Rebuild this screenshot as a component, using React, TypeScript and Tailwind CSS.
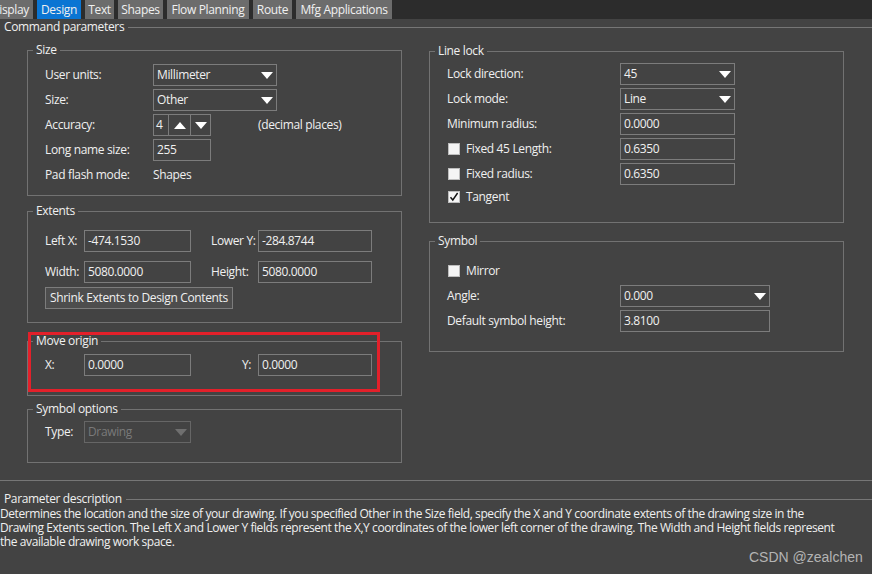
import React from 'react';

const tabs = [
  { label: 'isplay', w: 'w-[33px]', active: false },
  { label: 'Design', w: 'w-[44px]', active: true },
  { label: 'Text', w: 'w-[29px]', active: false },
  { label: 'Shapes', w: 'w-[45px]', active: false },
  { label: 'Flow Planning', w: 'w-[82px]', active: false },
  { label: 'Route', w: 'w-[39px]', active: false },
  { label: 'Mfg Applications', w: 'w-[96px]', active: false },
];

function Arrow({ up = false, color = '#ffffff' }: { up?: boolean; color?: string }) {
  return (
    <svg width="12" height="7" viewBox="0 0 12 7" className="shrink-0">
      <path d={up ? 'M0 7H12L6 0Z' : 'M0 0H12L6 7Z'} fill={color} />
    </svg>
  );
}

function Field({ value, className }: { value: string; className: string }) {
  return (
    <div className={`h-[22px] border border-[#7c7c7c] flex items-center pl-[3px] ${className}`}>
      {value}
    </div>
  );
}

function Select({ value, className, disabled = false }: { value: string; className: string; disabled?: boolean }) {
  return (
    <div
      className={`h-[22px] border flex items-center justify-between pl-[3px] pr-[3px] ${
        disabled ? 'border-[#666666] text-[#7a7a7a]' : 'border-[#7c7c7c]'
      } ${className}`}
    >
      <span>{value}</span>
      <Arrow color={disabled ? '#6f6f6f' : '#ffffff'} />
    </div>
  );
}

function Check({ checked = false }: { checked?: boolean }) {
  return (
    <div className="w-[12px] h-[12px] bg-[#f4f4f4] border border-[#bdbdbd] flex items-center justify-center shrink-0">
      {checked && (
        <svg width="10" height="10" viewBox="0 0 10 10">
          <path d="M1.5 5.2L3.8 8L8.6 1" stroke="#111" strokeWidth="1.4" fill="none" />
        </svg>
      )}
    </div>
  );
}

function Group({ title, className, children }: { title: string; className: string; children: React.ReactNode }) {
  return (
    <fieldset className={`border border-[#727272] px-[17px] ${className}`}>
      <legend className="-ml-[12px] px-[3px] leading-[16px]">{title}</legend>
      {children}
    </fieldset>
  );
}

function Row({ label, labelW, children }: { label: string; labelW: string; children: React.ReactNode }) {
  return (
    <div className="flex items-center h-[22px]">
      <span className={`${labelW} shrink-0`}>{label}</span>
      {children}
    </div>
  );
}

export default function App() {
  return (
    <div className="relative w-[872px] h-[574px] overflow-hidden bg-[#434343] text-[#f0f0f0] text-[12px] leading-[16px] font-['Open_Sans',sans-serif] tracking-[-0.35px]">
      {/* tab strip */}
      <div className="h-[19px] bg-[#2c2c2c] flex gap-[4px]">
        {tabs.map((t) => (
          <div
            key={t.label}
            className={`${t.w} flex items-center ${t.label === 'isplay' ? 'justify-end pr-[4px]' : 'justify-center'} ${
              t.active ? 'bg-[#0a75d3]' : 'bg-[#6c6c6c]'
            } whitespace-nowrap`}
          >
            {t.label}
          </div>
        ))}
      </div>

      {/* command parameters */}
      <fieldset className="border-t border-b border-[#767676] h-[462px]">
        <legend className="px-[4px] leading-[16px]">Command parameters</legend>
        <div className="flex pl-[27px] gap-[27px]">
          {/* left column */}
          <div className="w-[375px] flex flex-col">
            <Group title="Size" className="mt-[7px] h-[154px] pt-[6px]">
              <div className="flex flex-col gap-[3px]">
                <Row label="User units:" labelW="w-[108px]">
                  <Select value="Millimeter" className="w-[124px]" />
                </Row>
                <Row label="Size:" labelW="w-[108px]">
                  <Select value="Other" className="w-[124px]" />
                </Row>
                <Row label="Accuracy:" labelW="w-[108px]">
                  <div className="flex h-[22px] w-[58px] border border-[#7c7c7c]">
                    <div className="w-[14px] flex items-center pl-[2px]">4</div>
                    <div className="w-[22px] border-l border-[#7c7c7c] flex items-center justify-center">
                      <Arrow up />
                    </div>
                    <div className="flex-1 border-l border-[#7c7c7c] flex items-center justify-center">
                      <Arrow />
                    </div>
                  </div>
                  <span className="ml-[47px]">(decimal places)</span>
                </Row>
                <Row label="Long name size:" labelW="w-[108px]">
                  <Field value="255" className="w-[58px]" />
                </Row>
                <Row label="Pad flash mode:" labelW="w-[108px]">
                  <span>Shapes</span>
                </Row>
              </div>
            </Group>

            <Group title="Extents" className="mt-[7px] h-[120px] pt-[11px]">
              <div className="flex flex-col gap-[9px]">
                <div className="flex items-center">
                  <Row label="Left X:" labelW="w-[39px]">
                    <Field value="-474.1530" className="w-[107px]" />
                  </Row>
                  <div className="ml-[20px]">
                    <Row label="Lower Y:" labelW="w-[47px]">
                      <Field value="-284.8744" className="w-[114px]" />
                    </Row>
                  </div>
                </div>
                <div className="flex items-center">
                  <Row label="Width:" labelW="w-[39px]">
                    <Field value="5080.0000" className="w-[107px]" />
                  </Row>
                  <div className="ml-[20px]">
                    <Row label="Height:" labelW="w-[47px]">
                      <Field value="5080.0000" className="w-[114px]" />
                    </Row>
                  </div>
                </div>
              </div>
              <button className="mt-[4px] h-[22px] w-[188px] border border-[#7c7c7c] bg-[#4d4d4d] flex items-center justify-center">
                Shrink Extents to Design Contents
              </button>
            </Group>

            <div className="relative mt-[10px]">
              <Group title="Move origin" className="h-[63px] pt-[5px]">
                <div className="flex items-center">
                  <Row label="X:" labelW="w-[39px]">
                    <Field value="0.0000" className="w-[107px]" />
                  </Row>
                  <div className="ml-[51px]">
                    <Row label="Y:" labelW="w-[16px]">
                      <Field value="0.0000" className="w-[114px]" />
                    </Row>
                  </div>
                </div>
              </Group>
              <div className="absolute left-[1px] top-[-1px] w-[352px] h-[60px] border-[3px] border-[#e3202a]" />
            </div>

            <Group title="Symbol options" className="mt-[5px] h-[62px] pt-[4px]">
              <Row label="Type:" labelW="w-[39px]">
                <Select value="Drawing" className="w-[107px]" disabled />
              </Row>
            </Group>
          </div>

          {/* right column */}
          <div className="w-[415px] flex flex-col">
            <Group title="Line lock" className="mt-[8px] h-[180px] pt-[4px]">
              <div className="flex flex-col gap-[3px]">
                <Row label="Lock direction:" labelW="w-[173px]">
                  <Select value="45" className="w-[115px]" />
                </Row>
                <Row label="Lock mode:" labelW="w-[173px]">
                  <Select value="Line" className="w-[115px]" />
                </Row>
                <Row label="Minimum radius:" labelW="w-[173px]">
                  <Field value="0.0000" className="w-[115px]" />
                </Row>
                <div className="flex items-center h-[22px]">
                  <div className="w-[173px] flex items-center gap-[6px] pl-[1px]">
                    <Check />
                    <span>Fixed 45 Length:</span>
                  </div>
                  <Field value="0.6350" className="w-[115px]" />
                </div>
                <div className="flex items-center h-[22px]">
                  <div className="w-[173px] flex items-center gap-[6px] pl-[1px]">
                    <Check />
                    <span>Fixed radius:</span>
                  </div>
                  <Field value="0.6350" className="w-[115px]" />
                </div>
              </div>
              <div className="flex items-center gap-[6px] pl-[1px] mt-[4px]">
                <Check checked />
                <span>Tangent</span>
              </div>
            </Group>

            <Group title="Symbol" className="mt-[10px] h-[119px] pt-[15px]">
              <div className="flex items-center gap-[6px] pl-[1px] h-[14px]">
                <Check />
                <span>Mirror</span>
              </div>
              <div className="flex flex-col gap-[3px] mt-[7px]">
                <Row label="Angle:" labelW="w-[173px]">
                  <Select value="0.000" className="w-[150px]" />
                </Row>
                <Row label="Default symbol height:" labelW="w-[173px]">
                  <Field value="3.8100" className="w-[150px]" />
                </Row>
              </div>
            </Group>
          </div>
        </div>
      </fieldset>

      {/* parameter description */}
      <fieldset className="mt-[10px] border-t border-[#767676]">
        <legend className="px-[4px] leading-[16px]">Parameter description</legend>
        <div className="leading-[14px] whitespace-nowrap tracking-[-0.42px]">
          <div>
            Determines the location and the size of your drawing. If you specified Other in the Size field, specify the X and Y coordinate extents of the drawing size in the
          </div>
          <div>
            Drawing Extents section. The Left X and Lower Y fields represent the X,Y coordinates of the lower left corner of the drawing. The Width and Height fields represent
          </div>
          <div>the available drawing work space.</div>
        </div>
      </fieldset>

      <div className="absolute left-[749px] top-[549px] text-[14px] tracking-normal font-['Liberation_Sans',sans-serif] text-[#b4b4b4]">
        CSDN @zealchen
      </div>
    </div>
  );
}
